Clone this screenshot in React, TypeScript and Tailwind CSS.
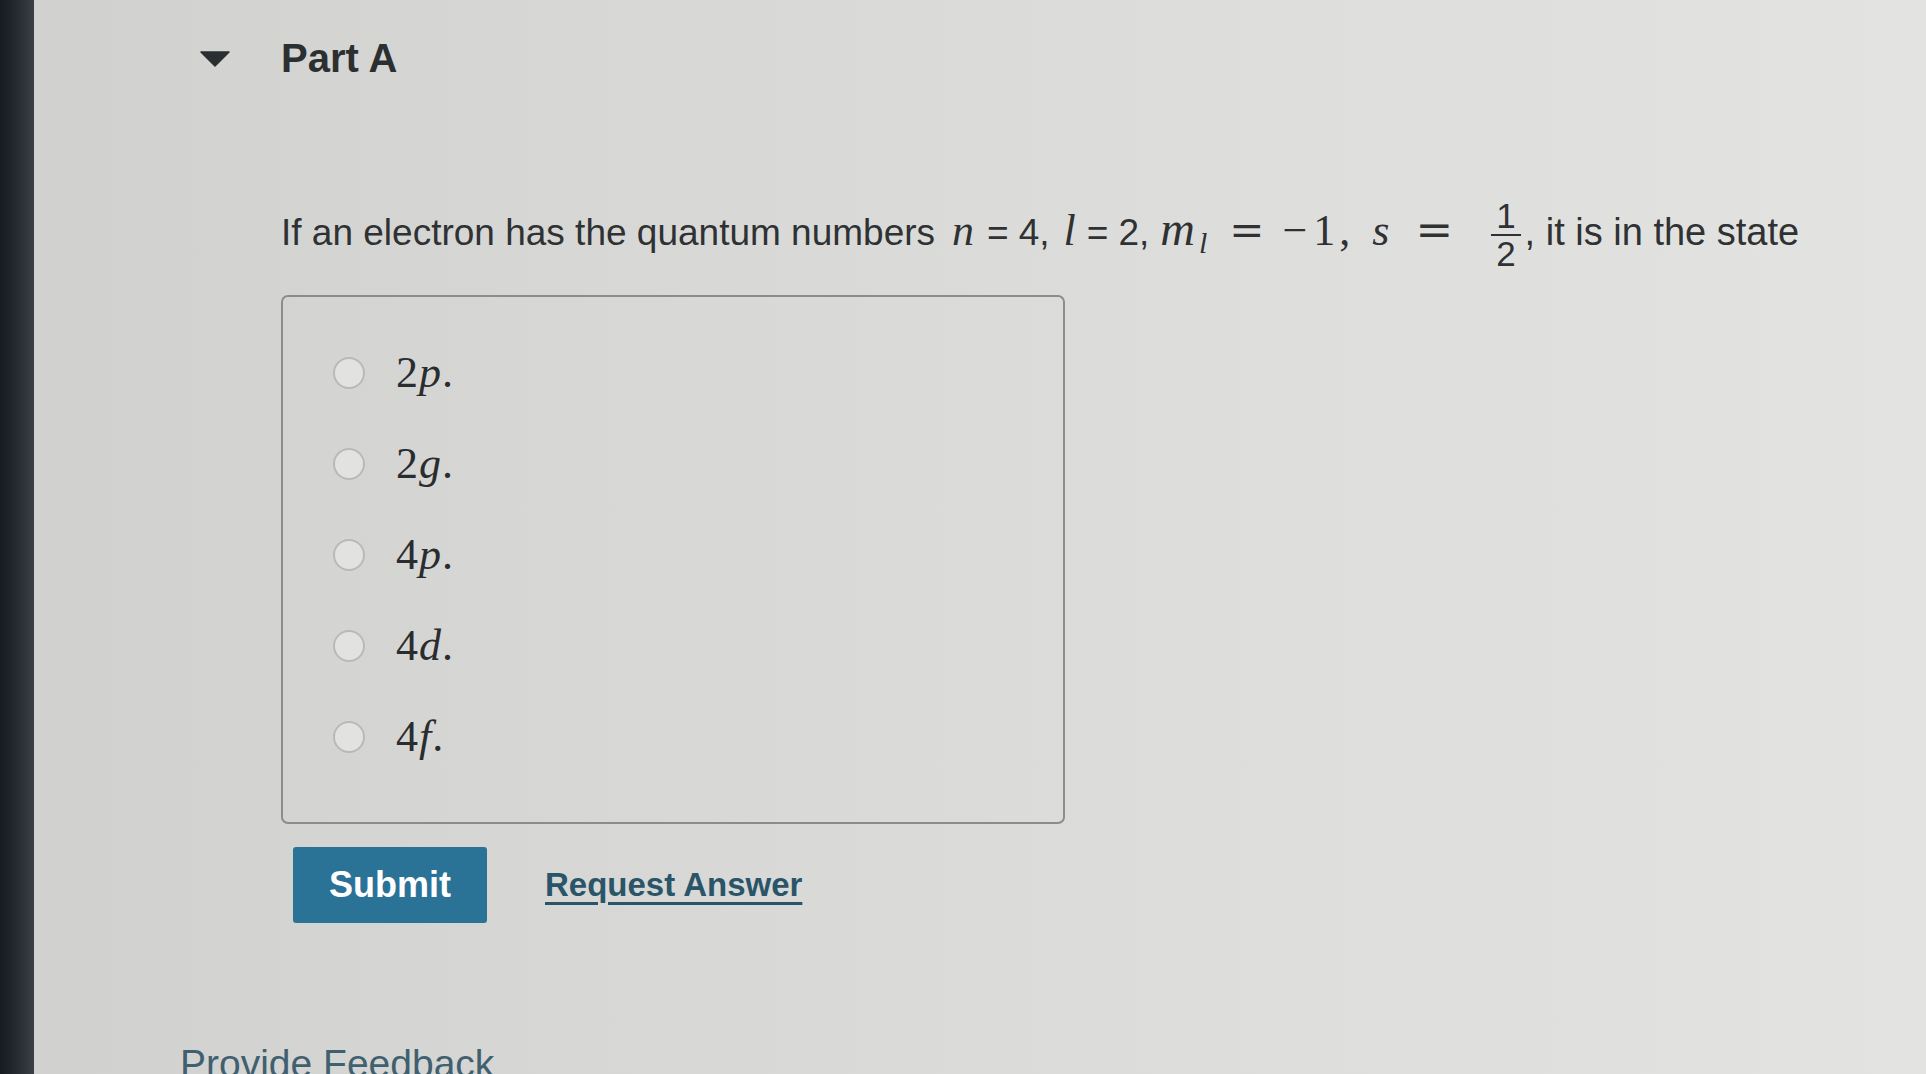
import React from 'react'

const sans = 'font-["Liberation_Sans",Arial,sans-serif]'
const serif = 'font-["Liberation_Serif","Times_New_Roman",serif]'
const wideSerif = 'font-["DejaVu_Serif",serif]'

const options = [
  { num: '2', letter: 'p' },
  { num: '2', letter: 'g' },
  { num: '4', letter: 'p' },
  { num: '4', letter: 'd' },
  { num: '4', letter: 'f' },
]

export default function App() {
  return (
    <div className={`flex h-[1074px] w-[1926px] overflow-hidden ${sans} text-[#2f3133]`}>
      {/* dark edge of the monitor */}
      <div className="w-[34px] shrink-0 bg-linear-to-r from-[#161b1f] via-[#252b30] to-[#3a4046]" />

      <main className="flex-1 bg-linear-to-r from-[#d1d2d0] via-[#dbdcda] to-[#e3e4e2]">
        {/* Part header */}
        <div className="mt-[34px] ml-[166px] flex items-center gap-[51px]">
          <svg width="30" height="16" viewBox="0 0 30 16" className="mt-[2px]">
            <polygon points="1,1 29,1 15,15" fill="#2b2e31" strokeLinejoin="round" stroke="#2b2e31" strokeWidth="1.5" />
          </svg>
          <h2 className="text-[40px] font-bold leading-[48px] text-[#2c2f32]">Part A</h2>
        </div>

        <div className="ml-[247px]">
          {/* Question */}
          <p className="mt-[107px] whitespace-nowrap text-[37px] leading-[80px]">
            <span>If an electron has the quantum numbers</span>
            <span className={`${serif} ml-[17px] inline-block text-[44px] italic`}>n</span>
            <span className="ml-[13px] inline-block">=</span>
            <span className="ml-[10px] inline-block">4,</span>
            <span className={`${serif} ml-[14px] inline-block text-[44px] italic`}>l</span>
            <span className="ml-[11px] inline-block">=</span>
            <span className="ml-[10px] inline-block">2,</span>
            <span className={`${serif} ml-[11px] inline-block text-[48px] italic`}>
              m<sub className="ml-[4px] text-[30px] leading-none">l</sub>
            </span>
            <span className={`${wideSerif} ml-[22px] inline-block text-[42px]`}>=</span>
            <span className={`${serif} ml-[18px] inline-block text-[44px]`}>−</span>
            <span className={`${serif} ml-[6px] inline-block text-[44px] tracking-[4px]`}>1,</span>
            <span className={`${serif} ml-[18px] inline-block text-[44px] italic`}>s</span>
            <span className={`${wideSerif} ml-[26px] inline-block text-[45px] leading-[40px]`}>=</span>
            <span className="ml-[38px] inline-flex flex-col items-center align-middle text-[35px] leading-[36px]">
              <span className="px-[5px]">1</span>
              <span className="h-[2px] w-full bg-[#2f3133]" />
              <span className="px-[5px]">2</span>
            </span>
            <span className="ml-[4px] text-[38px]">, it is in the state</span>
          </p>

          {/* Choices */}
          <div className="mt-[22px] h-[529px] w-[784px] rounded-[7px] border-2 border-[#8c8d8b] pt-[30px] pb-[44px] pl-[50px]">
            {options.map((o, i) => (
              <label key={i} className="flex h-[91px] items-center gap-[31px]">
                <span className="h-[32px] w-[32px] rounded-full border-2 border-[#b9bab8] bg-[#e2e3e1]" />
                <span className={`${serif} text-[44px] tracking-[1px] text-[#2a2c2e]`}>
                  {o.num}
                  <span className="italic">{o.letter}</span>.
                </span>
              </label>
            ))}
          </div>

          {/* Actions */}
          <div className="mt-[23px] flex items-center gap-[58px] pl-[12px]">
            <button className="h-[76px] w-[194px] rounded-[3px] bg-[#2b7297] text-[36px] font-bold text-white">
              Submit
            </button>
            <a className="text-[33px] font-bold text-[#2a5568] underline decoration-[3px] underline-offset-[6px]">
              Request Answer
            </a>
          </div>
        </div>

        <div className="mt-[112px] ml-[146px] text-[39px] text-[#40606f]">Provide Feedback</div>
      </main>
    </div>
  )
}
